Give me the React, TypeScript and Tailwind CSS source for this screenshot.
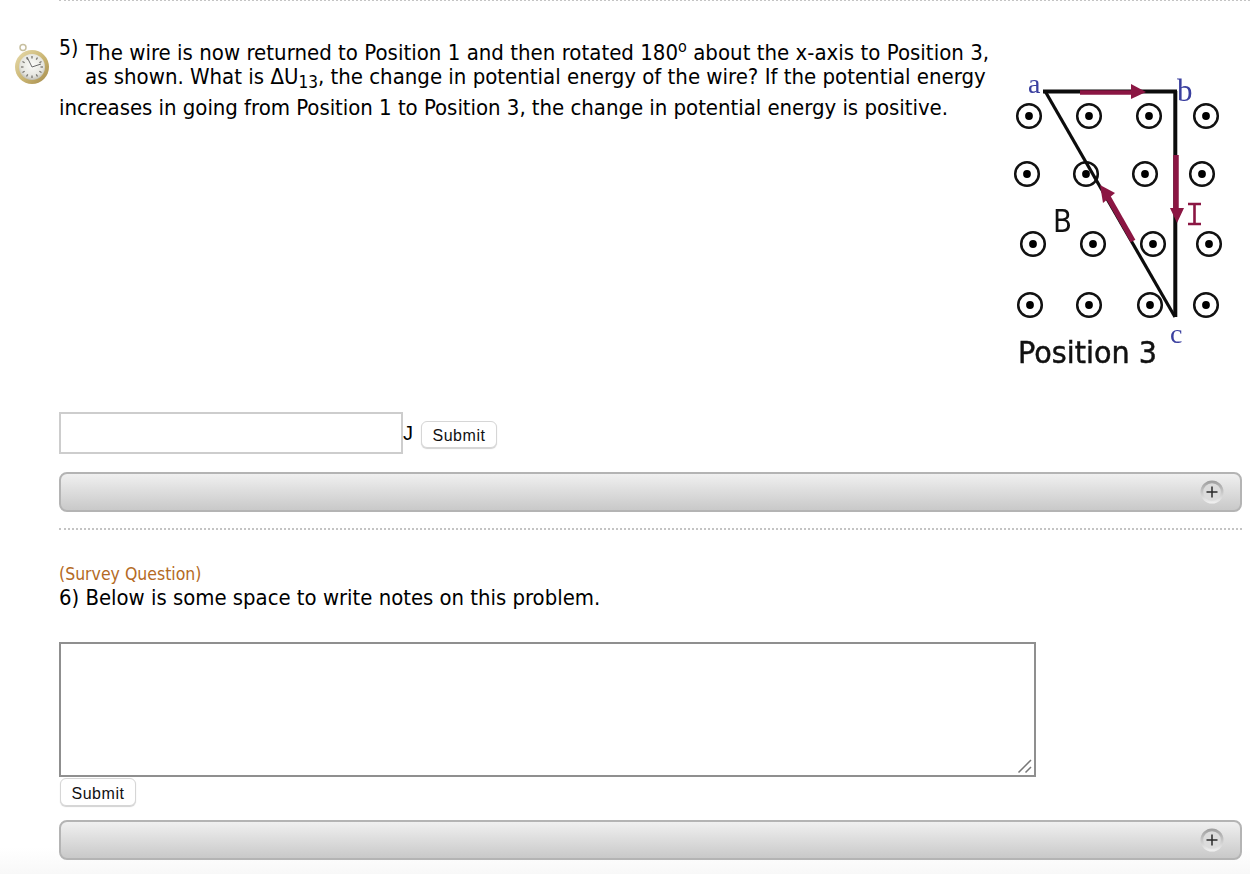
import React from "react";

const DOTS: [number, number][] = [
  [1029, 116], [1089, 116], [1149, 116], [1206, 116],
  [1027, 174], [1086, 174], [1145, 174], [1202, 174],
  [1033, 244], [1093, 244], [1153, 244], [1209, 244],
  [1030, 305], [1089, 305], [1150, 305], [1206, 305],
];

function Diagram() {
  const ox = 1010;
  const oy = 55;
  return (
    <svg width="220" height="325" viewBox="0 0 220 325" className="block [filter:blur(0.35px)]">
      <g transform={`translate(${-ox} ${-oy})`}>
        {DOTS.map(([x, y]) => (
          <g key={`${x}-${y}`}>
            <circle cx={x} cy={y} r="11.8" fill="none" stroke="#111" strokeWidth="2.5" />
            <circle cx={x} cy={y} r="3.9" fill="#000" />
          </g>
        ))}
        <path d="M1043 91.5H1177M1175.3 91V317" fill="none" stroke="#0c0c0c" strokeWidth="4" />
        <path d="M1045 91L1175 317" fill="none" stroke="#0c0c0c" strokeWidth="3.2" />
        <path d="M1080 92.5H1132" stroke="#8b1643" strokeWidth="4.5" fill="none" />
        <path d="M1131 84L1146 92L1131 99Z" fill="#8b1643" />
        <path d="M1176 155V209" stroke="#8b1643" strokeWidth="5.5" fill="none" />
        <path d="M1170 208H1184L1177 223Z" fill="#8b1643" />
        <path d="M1133 241L1108 197" stroke="#8b1643" strokeWidth="5.5" fill="none" />
        <path d="M1100 185L1115 193L1103 203Z" fill="#8b1643" />
        <path d="M1188 204H1201M1194.5 204V224M1188 224H1201" stroke="#8b1643" strokeWidth="2.6" fill="none" />
        <text x="1028" y="93" fontFamily="'Liberation Serif', serif" fontSize="28" fill="#3a3f9f">a</text>
        <text x="1177" y="101" fontFamily="'Liberation Serif', serif" fontSize="31" fill="#3a3f9f">b</text>
        <text x="1170" y="343" fontFamily="'Liberation Serif', serif" fontSize="28" fill="#3a3f9f">c</text>
        <text x="1053" y="232" fontFamily="'DejaVu Sans', sans-serif" fontSize="32" textLength="19" lengthAdjust="spacingAndGlyphs" fill="#111">B</text>
        <text x="1018" y="363" fontFamily="'DejaVu Sans', sans-serif" fontSize="31" textLength="139" lengthAdjust="spacingAndGlyphs" fill="#111" stroke="#111" strokeWidth="0.5">Position 3</text>
      </g>
    </svg>
  );
}

function Stopwatch() {
  const ticks = Array.from({ length: 12 }, (_, i) => i * 30);
  return (
    <svg width="38" height="42" viewBox="0 0 38 42" className="block [filter:blur(0.3px)]">
      <defs>
        <radialGradient id="face" cx="0.5" cy="0.42" r="0.62">
          <stop offset="0" stopColor="#fbfbf8" />
          <stop offset="0.7" stopColor="#e6e6e0" />
          <stop offset="1" stopColor="#b5b3a8" />
        </radialGradient>
        <linearGradient id="ring" x1="0" y1="0" x2="1" y2="1">
          <stop offset="0" stopColor="#e8dcae" />
          <stop offset="0.55" stopColor="#c9b471" />
          <stop offset="1" stopColor="#a48a4c" />
        </linearGradient>
      </defs>
      <circle cx="9" cy="4.5" r="3" fill="none" stroke="#c7bf9f" strokeWidth="1.5" />
      <circle cx="18" cy="24" r="17" fill="url(#ring)" />
      <circle cx="18" cy="24" r="13" fill="url(#face)" />
      {ticks.map((deg) => (
        <path
          key={deg}
          d="M18 13V15.5"
          stroke="#77756e"
          strokeWidth="1.3"
          transform={`rotate(${deg} 18 24)`}
        />
      ))}
      <path d="M18 24L13 14M18 24L27 21" stroke="#6a6a6a" strokeWidth="1" fill="none" />
    </svg>
  );
}

function PlusIcon({ id }: { id: string }) {
  return (
    <svg width="24" height="24" viewBox="0 0 24 24" className="block">
      <defs>
        <linearGradient id={id} x1="0" y1="0" x2="0" y2="1">
          <stop offset="0" stopColor="#9c9c9c" />
          <stop offset="1" stopColor="#f2f2f2" />
        </linearGradient>
      </defs>
      <circle cx="12" cy="12" r="11.5" fill={`url(#${id})`} />
      <circle cx="12" cy="12" r="8.8" fill="#dcdcdc" />
      <path d="M12 6.5V17.5M6.5 12H17.5" stroke="#2a2a2a" strokeWidth="1.5" />
    </svg>
  );
}

function Bar({ id }: { id: string }) {
  return (
    <div className="h-[40px] rounded-[8px] border-2 border-[#b4b4b4] bg-gradient-to-b from-[#f0f0f0] to-[#c9c9c9] flex items-center justify-end pr-[16px]">
      <PlusIcon id={id} />
    </div>
  );
}

function SubmitButton({ tall }: { tall?: boolean }) {
  return (
    <button
      className={`${tall ? "h-[28px] pt-[4px]" : "h-[27px] pt-[2px]"} w-[76px] rounded-[6px] border border-[#d6d6d6] bg-white shadow-[0_1px_1px_rgba(0,0,0,0.18)] font-['Liberation_Sans',sans-serif] text-[16px] tracking-[0.55px] text-[#111] leading-none`}
    >
      Submit
    </button>
  );
}

const bodyFont = "font-['DejaVu_Sans',sans-serif] [font-stretch:condensed]";

export default function App() {
  return (
    <div className="h-[874px] overflow-hidden bg-[linear-gradient(to_bottom,#ffffff_97%,#f8f8f8_100%)]">
      <div className="ml-[59px] -mt-[1px] mb-[1px] border-t-2 border-dotted border-[#c4c4c4]" />
      <div className="flex h-[410px]">
        <div className="w-[59px] shrink-0 pl-[14px] pt-[41px]">
          <Stopwatch />
        </div>
        <div className={`w-[951px] shrink-0 pt-[37px] text-[22px] whitespace-nowrap text-black ${bodyFont}`}>
          <div className="flex h-[24px] items-start leading-[24px]">
            <span className="w-[27px] -mt-[3px] text-[21px]">5)</span>
            <span className="mt-[2px] tracking-[0.02px]">
              The wire is now returned to Position 1 and then rotated 180<sup className="text-[16px]">o</sup> about the x-axis to Position 3,
            </span>
          </div>
          <div className="h-[30px] pl-[26px] pt-[2px] leading-[24px]">
            as shown. What is ΔU<sub className="text-[17px]">13</sub>, the change in potential energy of the wire? If the potential energy
          </div>
          <div className="leading-[30px] tracking-[-0.04px]">
            increases in going from Position 1 to Position 3, the change in potential energy is positive.
          </div>
        </div>
        <div className="pt-[53px]">
          <Diagram />
        </div>
      </div>
      <div className="ml-[59px] mr-[8px]">
        <div className="flex items-start h-[42px]">
          <div className="w-[344px] h-[42px] border-2 border-[#cdcdcd] bg-white" />
          <span className="font-['Liberation_Sans',sans-serif] text-[20px] leading-[24px] mt-[9px] w-[18px] text-black">J</span>
          <div className="mt-[9px]">
            <SubmitButton />
          </div>
        </div>
        <div className="mt-[18px]">
          <Bar id="plus-a" />
        </div>
        <div className="mt-[16px] border-t-2 border-dotted border-[#c4c4c4]" />
        <div className={`mt-[33px] text-[17.5px] leading-[22px] text-[#b46a24] ${bodyFont}`}>(Survey Question)</div>
        <div className={`text-[21.9px] leading-[26px] text-black ${bodyFont}`}>6) Below is some space to write notes on this problem.</div>
        <div className="relative mt-[31px] w-[977px]">
          <textarea className="block h-[135px] w-full resize-none border-2 border-[#8f8f8f] bg-white" />
          <svg width="16" height="16" viewBox="0 0 16 16" className="absolute right-[3px] bottom-[3px]">
            <path d="M1.5 14.5L14 2M8.5 14.5L14 9" stroke="#777" strokeWidth="1.5" fill="none" />
          </svg>
        </div>
        <div className="mt-[1px] ml-[1px]">
          <SubmitButton tall />
        </div>
        <div className="mt-[14px]">
          <Bar id="plus-b" />
        </div>
      </div>
    </div>
  );
}
